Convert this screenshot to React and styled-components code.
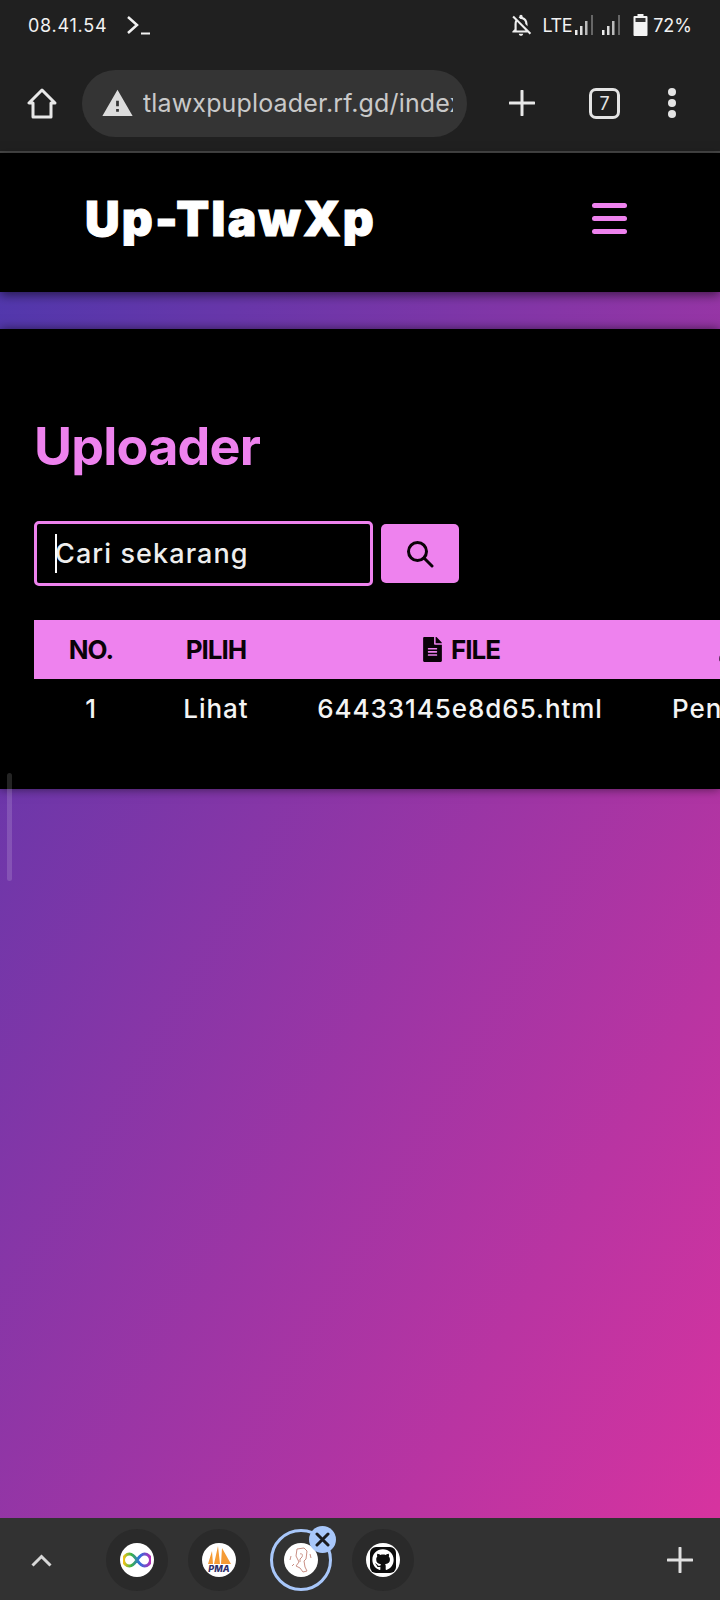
import React from "react";
import styled, { createGlobalStyle } from "styled-components";
import { FaFileAlt, FaGithub, FaUser } from "react-icons/fa";
import { MdWarning, MdOutlineNotificationsOff } from "react-icons/md";

const PINK = "#ee82ee";

const GlobalStyle = createGlobalStyle`
  html, body {
    margin: 0;
    padding: 0;
    background: #000;
  }
  * {
    box-sizing: border-box;
  }
`;

const Screen = styled.div`
  width: 720px;
  height: 1600px;
  overflow: hidden;
  display: flex;
  flex-direction: column;
  position: relative;
  font-family: Inter, "Liberation Sans", sans-serif;
`;

const StatusBar = styled.div`
  height: 50px;
  background: #202020;
  color: #f2f2f2;
  display: flex;
  align-items: center;
  padding: 0 28px;
  font-size: 18px;
`;

const Time = styled.span`
  letter-spacing: 0.75px;
  margin-right: 20px;
`;

const StatusRight = styled.div`
  margin-left: auto;
  display: flex;
  align-items: center;
`;

const LteLabel = styled.span`
  font-size: 18px;
  margin: 0 3px 0 8px;
  letter-spacing: -0.4px;
`;

const SignalIcon = styled.svg`
  margin-right: 8px;
`;

const BatteryIcon = styled.svg`
  margin-left: 4px;
`;

const Percent = styled.span`
  font-size: 18px;
  margin-left: 5px;
`;

const Toolbar = styled.div`
  height: 103px;
  background: #202020;
  border-bottom: 2px solid #484848;
  display: flex;
  align-items: center;
  padding: 5px 0 0 27px;
`;

const UrlPill = styled.div`
  width: 385px;
  height: 67px;
  margin-left: 25px;
  border-radius: 34px;
  background: #343434;
  display: flex;
  align-items: center;
  padding: 0 14px 0 19px;
  color: #c9c9c9;
  overflow: hidden;
`;

const UrlText = styled.div`
  flex: 1;
  margin-left: 9px;
  font-size: 25px;
  letter-spacing: 0.15px;
  white-space: nowrap;
  overflow: hidden;
`;

const ToolActions = styled.div`
  display: flex;
  align-items: center;
  margin-left: 42px;
`;

const TabCount = styled.div`
  width: 31px;
  height: 31px;
  margin-left: 54px;
  border: 3px solid #e4e4e4;
  border-radius: 7px;
  color: #e4e4e4;
  font-size: 18px;
  display: flex;
  align-items: center;
  justify-content: center;
`;

const MenuDots = styled.div`
  margin-left: 48px;
  display: flex;
  flex-direction: column;
  gap: 3px;
  span {
    width: 8px;
    height: 8px;
    border-radius: 50%;
    background: #e4e4e4;
  }
`;

const Page = styled.div`
  flex: 1;
  background: linear-gradient(120deg, #4a38ad 0%, #d7339f 100%);
  display: flex;
  flex-direction: column;
  position: relative;
`;

const Header = styled.header`
  height: 139px;
  background: #000;
  display: flex;
  align-items: center;
  padding: 0 93px 8px 85px;
  box-shadow: 0 3px 10px rgba(0, 0, 0, 0.55);
  position: relative;
`;

const Logo = styled.div`
  color: #fff;
  font-size: 48px;
  font-weight: 900;
  letter-spacing: 2.2px;
  -webkit-text-stroke: 1px #fff;
`;

const Burger = styled.div`
  margin-left: auto;
  width: 35px;
  display: flex;
  flex-direction: column;
  gap: 8px;
  span {
    height: 5px;
    border-radius: 3px;
    background: ${PINK};
  }
`;

const Card = styled.section`
  height: 460px;
  margin-top: 37px;
  background: #000;
  padding: 86px 0 0 34px;
  box-shadow: 0 0 10px rgba(0, 0, 0, 0.55);
`;

const Title = styled.h1`
  margin: 0;
  color: ${PINK};
  font-size: 52px;
  line-height: 64px;
  font-weight: 700;
  letter-spacing: -0.8px;
`;

const SearchRow = styled.div`
  display: flex;
  align-items: center;
  gap: 8px;
  margin-top: 42px;
`;

const SearchInput = styled.div`
  width: 339px;
  height: 65px;
  border: 3px solid ${PINK};
  border-radius: 5px;
  display: flex;
  align-items: center;
  padding-left: 18px;
  color: #eee;
  font-size: 27px;
  font-weight: 500;
  letter-spacing: 1.1px;
  position: relative;
`;

const Caret = styled.i`
  position: absolute;
  left: 18px;
  top: 10px;
  width: 2px;
  height: 39px;
  background: #fff;
`;

const SearchButton = styled.button`
  width: 78px;
  height: 59px;
  border: 0;
  border-radius: 5px;
  background: ${PINK};
  display: flex;
  align-items: center;
  justify-content: center;
  padding: 0;
`;

const Table = styled.table`
  margin-top: 34px;
  border-collapse: collapse;
  table-layout: fixed;
  width: 858px;
`;

const HeadCell = styled.th`
  height: 59px;
  padding: 0;
  background: ${PINK};
  color: #0a0208;
  font-size: 26px;
  font-weight: 700;
  letter-spacing: -1px;
  text-align: center;
  white-space: nowrap;
  svg {
    vertical-align: -3px;
    margin-right: 6px;
  }
`;

const BodyCell = styled.td`
  height: 58px;
  padding: 0 0 0 ${(p) => (p.$indent ? "36px" : "0")};
  color: #f4f4f4;
  font-size: 26px;
  font-weight: 500;
  letter-spacing: 0.95px;
  text-align: ${(p) => (p.$indent ? "left" : "center")};
  white-space: nowrap;
`;

const ScrollThumb = styled.div`
  position: absolute;
  left: 7px;
  top: 620px;
  width: 5px;
  height: 108px;
  border-radius: 3px;
  background: rgba(255, 255, 255, 0.14);
`;

const BottomBar = styled.div`
  height: 82px;
  background: #323232;
  display: flex;
  align-items: center;
  padding: 2px 0 0 31px;
`;

const TabGroup = styled.div`
  display: flex;
  gap: 20px;
  margin-left: 54px;
`;

const TabBubble = styled.div`
  width: 62px;
  height: 62px;
  border-radius: 50%;
  background: ${(p) => (p.$active ? "transparent" : "#2a2a2a")};
  border: ${(p) => (p.$active ? "3px solid #a8c7fa" : "0")};
  display: flex;
  align-items: center;
  justify-content: center;
  position: relative;
`;

const Favicon = styled.div`
  width: 34px;
  height: 34px;
  border-radius: 50%;
  background: #fff;
  display: flex;
  align-items: center;
  justify-content: center;
  overflow: hidden;
`;

const GithubSquare = styled.div`
  width: 26px;
  height: 26px;
  border-radius: 6px;
  background: #0d0d0d;
  color: #fff;
  display: flex;
  align-items: center;
  justify-content: center;
`;

const CloseBadge = styled.div`
  position: absolute;
  top: -6px;
  right: -7px;
  width: 27px;
  height: 27px;
  border-radius: 50%;
  background: #a8c7fa;
  display: flex;
  align-items: center;
  justify-content: center;
`;

const NewTab = styled.div`
  margin-left: auto;
  margin-right: 27px;
  display: flex;
`;

const Signal = () => (
  <SignalIcon width="19" height="22" viewBox="0 0 19 22">
    <rect x="0" y="16" width="2.500" height="5" fill="#eee" />
    <rect x="5" y="12" width="2.500" height="9" fill="#ddd" />
    <rect x="10" y="7" width="2.500" height="14" fill="#bbb" />
    <rect x="16" y="1" width="2" height="20" fill="#666" />
  </SignalIcon>
);

const Plus = ({ size, color }) => (
  <svg width={size} height={size} viewBox="0 0 26 26">
    <path d="M13 1v24M1 13h24" stroke={color} strokeWidth="3" strokeLinecap="round" />
  </svg>
);

const InfinityLogo = () => (
  <svg width="28" height="16" viewBox="0 0 28 16" fill="none">
    <defs>
      <linearGradient id="inf" x1="0" y1="0" x2="1" y2="0">
        <stop offset="0" stopColor="#f5c518" />
        <stop offset="0.3" stopColor="#38b24a" />
        <stop offset="0.6" stopColor="#2f6fe0" />
        <stop offset="1" stopColor="#b02fb5" />
      </linearGradient>
    </defs>
    <path
      d="M14 8C11 3.5 9 2 6.500 2a6 6 0 0 0 0 12C9 14 11 12.500 14 8s5-6 7.500-6a6 6 0 0 1 0 12C19 14 17 12.500 14 8Z"
      stroke="url(#inf)"
      strokeWidth="3"
    />
  </svg>
);

const PmaLogo = () => (
  <svg width="34" height="34" viewBox="0 0 34 34">
    <path d="M6 21 10 8l1 13ZM12 21 16 3l2 18ZM19 21 20 5l9 16Z" fill="#f59b35" />
    <text x="17" y="29" textAnchor="middle" fontSize="9" fontWeight="800" fontStyle="italic" fill="#2f2f6b" fontFamily="Inter, sans-serif">
      PMA
    </text>
  </svg>
);

const SketchLogo = () => (
  <svg width="26" height="28" viewBox="0 0 26 28" fill="none" stroke="#c98f84" strokeWidth="1">
    <path d="M9 3l7-1 3 3-1 8-2 2 1 6 2 4-4 1-3-4-4-2 3-4-3-6Z" />
    <path d="M12 8c2-1 3 1 2 3l-2 2v3M3 10l-1 4M22 8l1 4M6 18l-2 2" />
  </svg>
);

const App = () => {
  return (
    <Screen>
      <GlobalStyle />
      <StatusBar>
        <Time>08.41.54</Time>
        <svg width="24" height="20" viewBox="0 0 24 20" fill="none" stroke="#f2f2f2">
          <path d="M1 2l9 8-9 8" strokeWidth="2.500" />
          <path d="M14 18.500h9" strokeWidth="2" />
        </svg>
        <StatusRight>
          <MdOutlineNotificationsOff size={26} color="#eee" />
          <LteLabel>LTE</LteLabel>
          <Signal />
          <Signal />
          <BatteryIcon width="15" height="22" viewBox="0 0 14 22">
            <path d="M4 0h6v2h3a1 1 0 0 1 1 1v18a1 1 0 0 1-1 1H1a1 1 0 0 1-1-1V3a1 1 0 0 1 1-1h3Z" fill="#f4f4f4" />
            <rect x="2" y="4" width="10" height="4" fill="#333" />
          </BatteryIcon>
          <Percent>72%</Percent>
        </StatusRight>
      </StatusBar>
      <Toolbar>
        <svg width="30" height="31" viewBox="0 0 30 31" fill="none" stroke="#e8e8e8" strokeWidth="3" strokeLinejoin="round">
          <path d="M15 2 2 15h4v14h18V15h4Z" />
        </svg>
        <UrlPill>
          <MdWarning size={33} color="#dcdcdc" />
          <UrlText>tlawxpuploader.rf.gd/index.php</UrlText>
        </UrlPill>
        <ToolActions>
          <Plus size={26} color="#e8e8e8" />
          <TabCount>7</TabCount>
          <MenuDots>
            <span />
            <span />
            <span />
          </MenuDots>
        </ToolActions>
      </Toolbar>
      <Page>
        <Header>
          <Logo>Up-TlawXp</Logo>
          <Burger>
            <span />
            <span />
            <span />
          </Burger>
        </Header>
        <Card>
          <Title>Uploader</Title>
          <SearchRow>
            <SearchInput>
              <Caret />
              Cari sekarang
            </SearchInput>
            <SearchButton>
              <svg width="28" height="28" viewBox="0 0 28 28" fill="none" stroke="#0a0208" strokeWidth="3" strokeLinecap="round">
                <circle cx="11.500" cy="11.500" r="9" />
                <path d="M18 18l8 8" />
              </svg>
            </SearchButton>
          </SearchRow>
          <Table>
            <colgroup>
              <col width="114" />
              <col width="136" />
              <col width="352" />
              <col width="256" />
            </colgroup>
            <thead>
              <tr>
                <HeadCell>NO.</HeadCell>
                <HeadCell>PILIH</HeadCell>
                <HeadCell>
                  <FaFileAlt size={25} />
                  FILE
                </HeadCell>
                <HeadCell>
                  <FaUser size={22} />
                  USER
                </HeadCell>
              </tr>
            </thead>
            <tbody>
              <tr>
                <BodyCell>1</BodyCell>
                <BodyCell>Lihat</BodyCell>
                <BodyCell>64433145e8d65.html</BodyCell>
                <BodyCell $indent>Pengunggah</BodyCell>
              </tr>
            </tbody>
          </Table>
        </Card>
        <ScrollThumb />
      </Page>
      <BottomBar>
        <svg width="21" height="13" viewBox="0 0 21 13" fill="none" stroke="#d8d8d8" strokeWidth="3">
          <path d="M1.500 11.500 10.500 2.500l9 9" />
        </svg>
        <TabGroup>
          <TabBubble>
            <Favicon>
              <InfinityLogo />
            </Favicon>
          </TabBubble>
          <TabBubble>
            <Favicon>
              <PmaLogo />
            </Favicon>
          </TabBubble>
          <TabBubble $active>
            <Favicon>
              <SketchLogo />
            </Favicon>
            <CloseBadge>
              <svg width="15" height="15" viewBox="0 0 15 15" stroke="#1b1b1f" strokeWidth="3" strokeLinecap="round">
                <path d="M2 2l11 11M13 2 2 13" />
              </svg>
            </CloseBadge>
          </TabBubble>
          <TabBubble>
            <Favicon>
              <GithubSquare>
                <FaGithub size={22} />
              </GithubSquare>
            </Favicon>
          </TabBubble>
        </TabGroup>
        <NewTab>
          <Plus size={26} color="#e0e0e0" />
        </NewTab>
      </BottomBar>
    </Screen>
  );
};

export default App;
